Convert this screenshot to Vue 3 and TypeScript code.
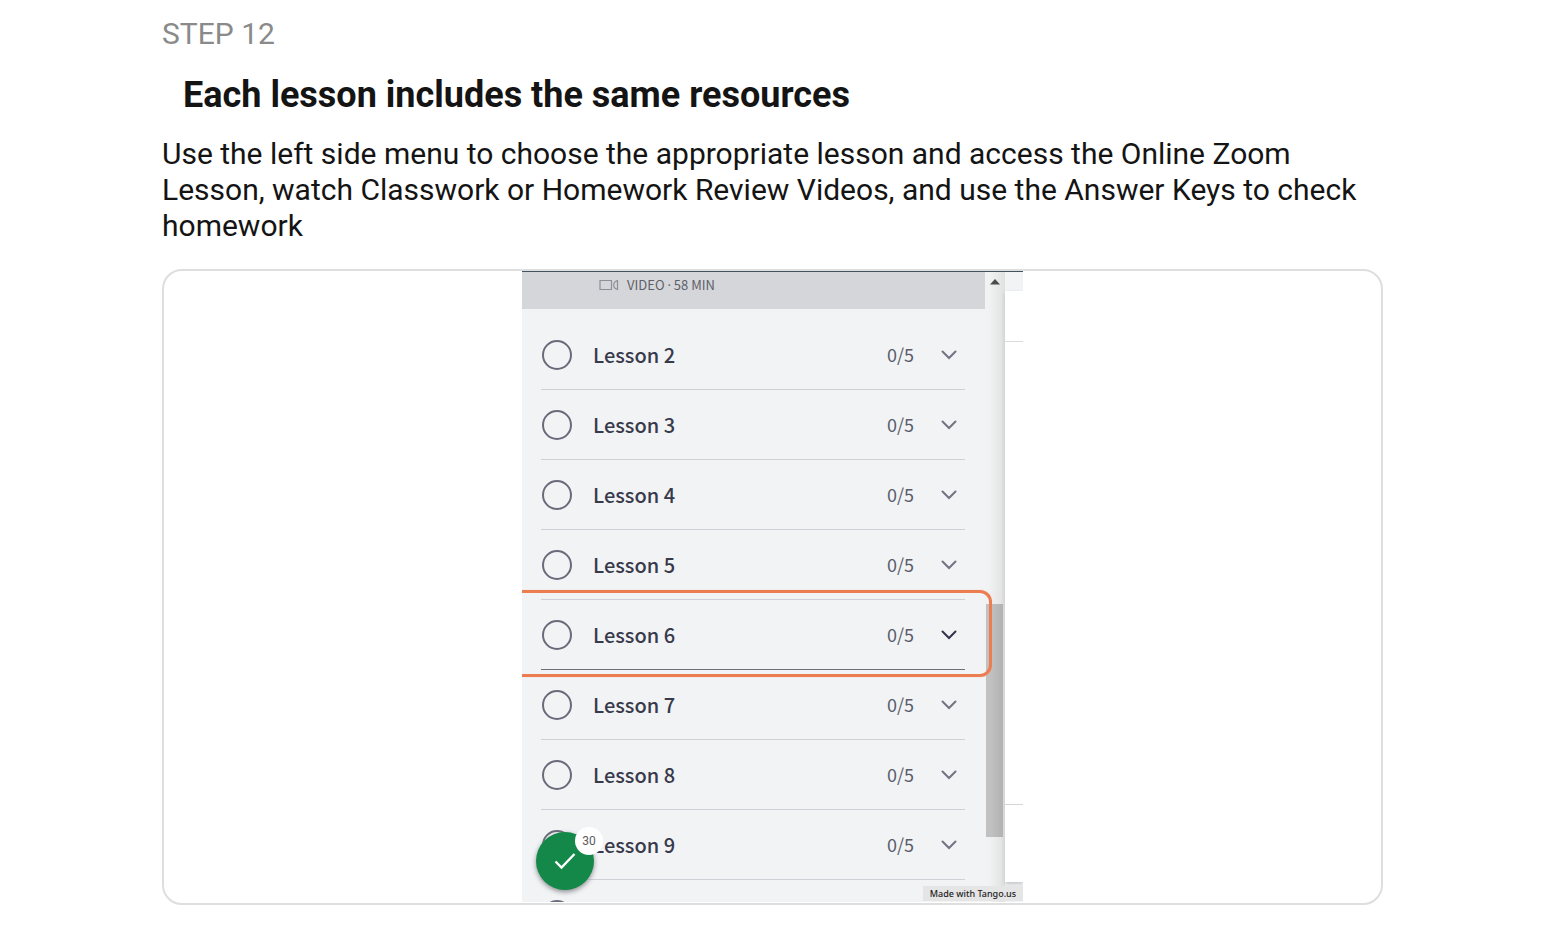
<script setup lang="ts">
import { ref } from 'vue'

interface Lesson {
  id: number
  title: string
  progress: string
  active: boolean
  done: boolean
}

const lessons = ref<Lesson[]>(
  [2, 3, 4, 5, 6, 7, 8, 9].map((n) => ({
    id: n,
    title: `Lesson ${n}`,
    progress: '0/5',
    active: n === 6,
    done: false,
  })),
)
</script>

<template>
  <main class="page">
    <p class="step">STEP 12</p>
    <h1 class="title">Each lesson includes the same resources</h1>
    <p class="description">
      Use the left side menu to choose the appropriate lesson and access the Online Zoom Lesson, watch
      Classwork or Homework Review Videos, and use the Answer Keys to check homework
    </p>

    <section class="card">
      <div class="shot">
        <div class="sidebar">
          <div class="video">
            <svg class="camera" viewBox="0 0 20 12" aria-hidden="true">
              <path d="M1 1.5h11.5v9H1zM18.5 1.5v9c-2.6-.8-3.8-2.4-3.8-4.5s1.2-3.7 3.8-4.5z" />
            </svg>
            <span>VIDEO <span class="dot">·</span> 58 MIN</span>
          </div>
          <ul class="lessons">
            <li v-for="lesson in lessons" :key="lesson.id" class="lesson" :class="{ active: lesson.active }">
              <input :id="`lesson-${lesson.id}`" v-model="lesson.done" class="circle" type="checkbox" />
              <label class="name" :for="`lesson-${lesson.id}`">{{ lesson.title }}</label>
              <span class="progress">{{ lesson.progress }}</span>
              <button class="toggle" type="button" :aria-label="`Expand ${lesson.title}`">
                <svg viewBox="0 0 16 10" aria-hidden="true"><path d="M1.5 1.5 8 8l6.5-6.5" /></svg>
              </button>
            </li>
            <li class="lesson">
              <input class="circle" type="checkbox" aria-label="Lesson 10" />
            </li>
          </ul>
        </div>

        <div class="track">
          <svg class="arrow" viewBox="0 0 10 6" aria-hidden="true"><path d="M0 5.5 5 0l5 5.5z" /></svg>
          <div class="thumb"></div>
        </div>

        <div class="content">
          <div class="panel">
            <div class="panel-head"></div>
            <div class="panel-body"></div>
          </div>
        </div>

        <div class="highlight"></div>
        <button class="tasks" type="button" aria-label="Tasks">
          <svg viewBox="0 0 22 18" aria-hidden="true"><path d="M1.5 9.5 7.5 15.5 20.5 2" /></svg>
          <span class="count">30</span>
        </button>
        <div class="credit">Made with Tango.us</div>
      </div>
    </section>
  </main>
</template>

<style>
body {
  margin: 0;
  background: #fff;
}
</style>

<style scoped>
.page {
  box-sizing: border-box;
  padding: 16px 162px 30px;
  font-family: Roboto, 'Liberation Sans', sans-serif;
  color: #141414;
}

.step {
  margin: 0;
  font-size: 30px;
  line-height: 36px;
  color: #8a8a8a;
}

.title {
  margin: 20px 0 0 21px;
  font-size: 36px;
  line-height: 46px;
  font-weight: 700;
}

.description {
  margin: 18px 0 0;
  font-size: 30px;
  line-height: 36px;
}

.card {
  display: flex;
  justify-content: center;
  margin-top: 25px;
  border: 2px solid #dedede;
  border-radius: 20px;
  overflow: hidden;
}

.shot {
  position: relative;
  display: flex;
  width: 501px;
  height: 631px;
  margin-bottom: 1px;
  overflow: hidden;
  background: #f1f3f5;
  font-family: 'Noto Sans CJK SC', 'Noto Sans', sans-serif;
}

.shot::before {
  content: '';
  position: absolute;
  inset: 0 0 auto;
  height: 1px;
  background: #43525c;
}

.sidebar {
  flex: 1;
}

.video {
  box-sizing: border-box;
  display: flex;
  align-items: flex-start;
  gap: 8px;
  height: 38px;
  padding: 4px 0 0 77px;
  background: #d5d6da;
  color: #5e6069;
  font-size: 13px;
  line-height: 20px;
}

.camera {
  width: 20px;
  height: 12px;
  margin-top: 4px;
  fill: none;
  stroke: #8d8f98;
  stroke-width: 1.2;
}

.dot {
  font-family: 'Noto Sans', sans-serif;
}

.lessons {
  margin: 11px 20px 0 19px;
  padding: 0;
  list-style: none;
}

.lesson {
  box-sizing: border-box;
  display: flex;
  align-items: center;
  height: 70px;
  border-bottom: 1px solid #cfd1d8;
  color: #383a4b;
}

.lesson.active {
  border-bottom-color: #6d6f7b;
}

.circle {
  appearance: none;
  box-sizing: border-box;
  width: 30px;
  height: 30px;
  margin: 0 21px 0 1px;
  border: 2px solid #696b7a;
  border-radius: 50%;
}

.name {
  flex: 1;
  font-size: 20px;
  line-height: 28px;
  font-weight: 500;
}

.progress {
  padding-bottom: 2px;
  color: #5b5d6b;
  font-size: 18px;
  line-height: 28px;
}

.toggle {
  display: flex;
  margin: 0 8px 0 27px;
  padding: 0;
  border: 0;
  background: none;
}

.toggle svg {
  width: 16px;
  height: 10px;
  fill: none;
  stroke: #717382;
  stroke-width: 2;
  stroke-linecap: round;
}

.active .toggle svg {
  stroke: #33354a;
}

.track {
  display: flex;
  flex-direction: column;
  align-items: center;
  box-sizing: border-box;
  width: 20px;
  padding-right: 1px;
  background: linear-gradient(90deg, #f1f2f3 20%, #e0e0e0);
}

.arrow {
  width: 10px;
  height: 6px;
  margin-top: 8px;
  fill: #4b4b4b;
}

.thumb {
  width: 17px;
  height: 233px;
  margin-top: 319px;
  background: linear-gradient(90deg, #c1c1c1 30%, #b1b1b1);
}

.content {
  width: 18px;
  padding-top: 20px;
}

.panel {
  height: 591px;
  background: #fff;
  box-shadow: 0 2px 4px #c4c4c4;
}

.panel-head {
  height: 50px;
  border-bottom: 1px solid #dcdcdc;
}

.panel-body {
  height: 462px;
  border-bottom: 1px solid #d5d5d5;
}

.highlight {
  position: absolute;
  top: 319px;
  left: -20px;
  box-sizing: border-box;
  width: 490px;
  height: 87px;
  border: 3px solid #ec7d51;
  border-radius: 12px;
  box-shadow: 0 0 1px #f0a585;
}

.tasks {
  position: absolute;
  bottom: 12px;
  left: 14px;
  display: flex;
  align-items: center;
  justify-content: center;
  width: 58px;
  height: 58px;
  padding: 0;
  border: 0;
  border-radius: 50%;
  background: #138848;
  box-shadow: 0 2px 5px #8b8d91;
}

.tasks svg {
  width: 22px;
  height: 18px;
  fill: none;
  stroke: #fff;
  stroke-width: 2.4;
}

.count {
  position: absolute;
  top: -5px;
  right: -9px;
  width: 28px;
  border-radius: 50%;
  background: #fff;
  color: #5a5a5a;
  font-family: Roboto, sans-serif;
  font-size: 12px;
  line-height: 28px;
  text-align: center;
}

.credit {
  position: absolute;
  right: 0;
  bottom: 1px;
  width: 100px;
  background: #e5e5e5;
  color: #222;
  font-family: 'Noto Sans', sans-serif;
  font-size: 9px;
  font-weight: 500;
  line-height: 15px;
  text-align: center;
}
</style>
